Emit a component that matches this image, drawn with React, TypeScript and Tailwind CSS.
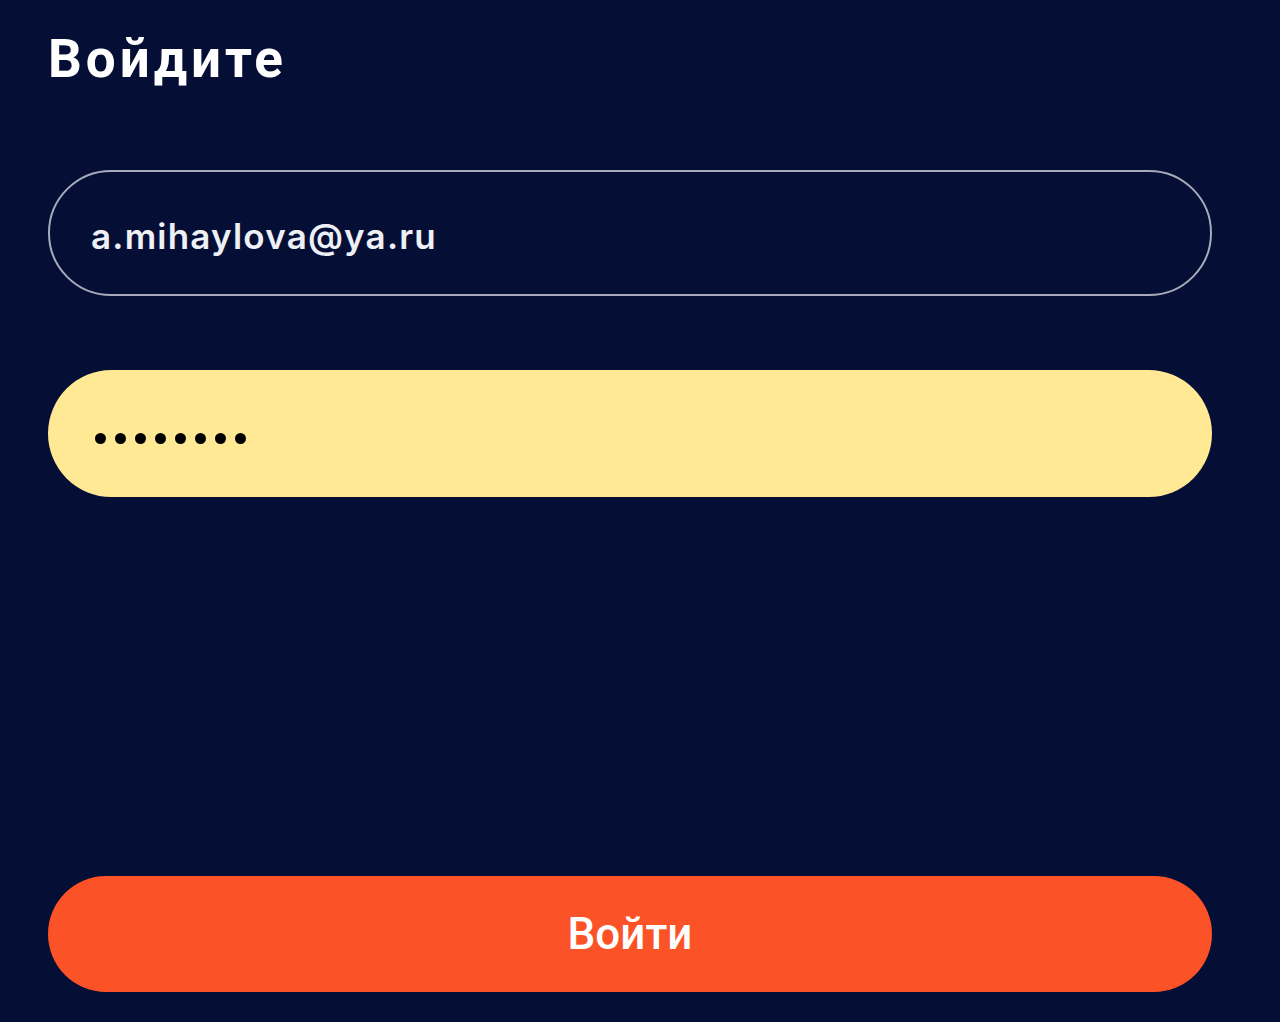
export default function App() {
  return (
    <div className="flex h-[1022px] w-full flex-col bg-[#050f36] pb-[30px] pl-[48px] pr-[68px] pt-[33px]">
      <h1 className="text-[53px] font-bold leading-none tracking-[4px] text-white [font-family:Roboto,sans-serif]">
        Войдите
      </h1>

      <div className="mt-[84px] flex h-[126px] items-center rounded-full border-2 border-[#a7abba] px-[41px]">
        <span className="mt-[6px] text-[35px] font-semibold tracking-[1.2px] text-[#eef0f5] [font-family:Inter,sans-serif]">
          a.mihaylova@ya.ru
        </span>
      </div>

      <div className="mt-[74px] flex h-[127px] items-center gap-[9px] rounded-full bg-[#ffe995] px-[47px]">
        {Array.from({ length: 8 }).map((_, i) => (
          <span key={i} className="mt-[10px] h-[11px] w-[11px] rounded-full bg-black" />
        ))}
      </div>

      <div className="flex-1" />

      <button className="flex h-[116px] items-center justify-center rounded-full bg-[#fb5227] text-[44px] font-medium text-white [font-family:Roboto,sans-serif]">
        Войти
      </button>
    </div>
  )
}
